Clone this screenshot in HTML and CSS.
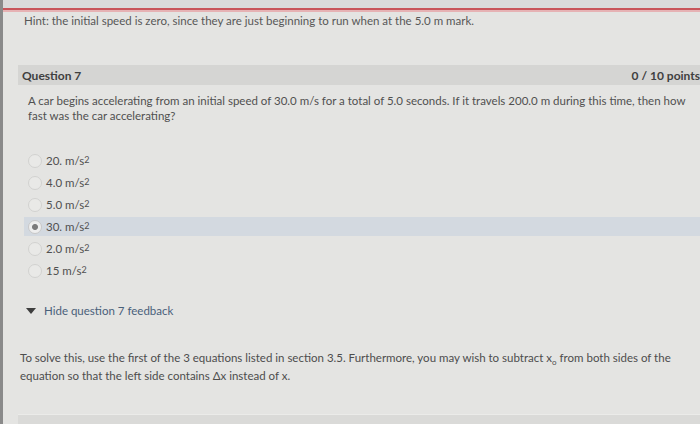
FILE: index.html
```html
<!DOCTYPE HTML>
<html>

<head>
	<meta charset="utf-8">
	<link rel="stylesheet" href="styles.css">
</head>

<body>
	<div class="page">
		<div class="topline"></div>

		<p class="hint">Hint: the initial speed is zero, since they are just beginning to run when at the 5.0 m mark.</p>

		<div class="qhead">
			<span class="qtitle">Question 7</span>
			<span class="qpoints">0 / 10 points</span>
		</div>

		<p class="qtext">A car begins accelerating from an initial speed of 30.0 m/s for a total of 5.0 seconds. If it travels 200.0 m during this time, then how fast was the car accelerating?</p>

		<ul class="answers">
			<li><span class="radio"></span>20. m/s<sup>2</sup></li>
			<li><span class="radio"></span>4.0 m/s<sup>2</sup></li>
			<li><span class="radio"></span>5.0 m/s<sup>2</sup></li>
			<li class="picked"><span class="radio"></span>30. m/s<sup>2</sup></li>
			<li><span class="radio"></span>2.0 m/s<sup>2</sup></li>
			<li><span class="radio"></span>15 m/s<sup>2</sup></li>
		</ul>

		<div class="toggle"><span class="arrow"></span>Hide question 7 feedback</div>

		<p class="feedback">To solve this, use the first of the 3 equations listed in section 3.5. Furthermore, you may wish to subtract x<sub>o</sub> from both sides of the equation so that the left side contains &Delta;x instead of x.</p>

		<div class="qhead next"></div>
	</div>
</body>

</html>
```

FILE: styles.css
```css
html, body {
	margin: 0;
	padding: 0;
	height: 100%;
	overflow: hidden;
}

body {
	background: #e3e3e1;
	font-family: Lato, "Open Sans", sans-serif;
	color: #4d4d4d;
}

.page {
	height: 424px;
	border-left: 3px solid #8a8a8a;
	padding-top: 8px;
	box-sizing: border-box;
	overflow: hidden;
	background: linear-gradient(#dadada 0, #dadada 8px, #e4e4e2 8px);
}

.topline {
	height: 2px;
	background: #c8545a;
	border-bottom: 2px solid #e6b2b4;
}

.hint {
	margin: 2px 0 0 21px;
	font-size: 11.5px;
	color: #575757;
}

.qhead {
	display: flex;
	justify-content: space-between;
	align-items: center;
	height: 20px;
	margin: 38px 0 0 15px;
	padding-left: 4px;
	background: #d5d5d3;
	font-size: 12px;
	font-weight: bold;
	color: #404040;
	white-space: nowrap;
}

.qpoints {
	margin-right: 0;
}

.qtext {
	margin: 8px 0 0 25px;
	padding-right: 8px;
	font-size: 11.5px;
	line-height: 15px;
	color: #505050;
}

.answers {
	list-style: none;
	margin: 28px 0 0 21px;
	padding: 0;
}

.answers li {
	display: flex;
	align-items: center;
	height: 19px;
	margin-bottom: 3px;
	padding-left: 4px;
	font-size: 11.5px;
	color: #505050;
}

.answers li.picked {
	background: #d3d9e0;
}

.answers sup {
	font-size: 9px;
	line-height: 0;
	position: relative;
	top: -1px;
}

.radio {
	width: 14px;
	height: 14px;
	margin-right: 4px;
	border: 1px solid #d2d2d0;
	border-radius: 50%;
	background: #e9e9e7;
	box-sizing: border-box;
}

.picked .radio {
	background: radial-gradient(circle, #7b7b7b 0, #7b7b7b 2.5px, #eeeeee 3.5px);
	border-color: #c8c8c8;
}

.toggle {
	display: flex;
	align-items: center;
	margin: 24px 0 0 23px;
	font-size: 11.5px;
	color: #49607a;
}

.arrow {
	width: 0;
	height: 0;
	margin-right: 8px;
	border-left: 5px solid transparent;
	border-right: 5px solid transparent;
	border-top: 6px solid #3e3e3e;
}

.feedback {
	margin: 32px 0 0 17px;
	padding-right: 10px;
	font-size: 11.5px;
	line-height: 18px;
	color: #4d4d4d;
}

.feedback sub {
	font-size: 8px;
	line-height: 0;
}

.next {
	margin-top: 29px;
	background: #dadad8;
	border-top: 1px solid #ebebe9;
}
```
